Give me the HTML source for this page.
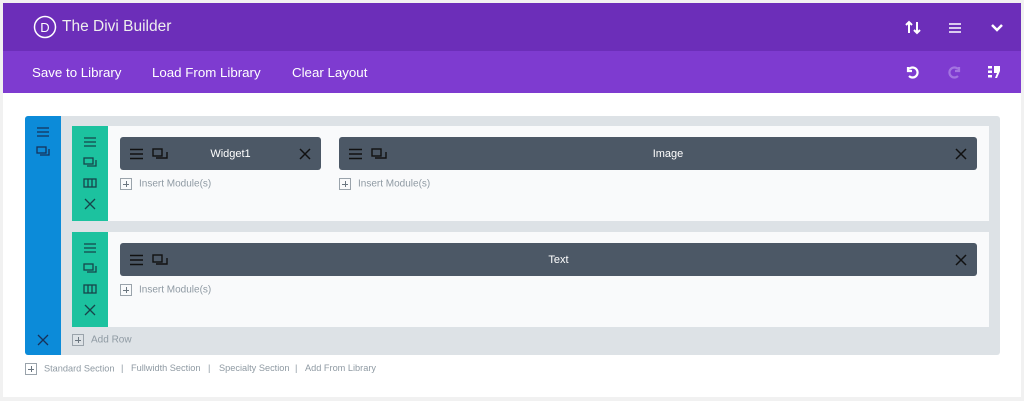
<!DOCTYPE html><html><head><style>
body{margin:0;width:1024px;height:401px;background:#f1f1f1;font-family:"Liberation Sans",sans-serif;position:relative;overflow:hidden}
.a{position:absolute}
.w{left:3px;top:3px;width:1018px;height:394px;background:#fff}
.hd{left:3px;top:3px;width:1018px;height:48px;background:#6c2eb9;color:#fff}
.tb{left:3px;top:51px;width:1018px;height:42px;background:#7e3bd0;color:#fff;font-size:13.3px}
.sec{left:25px;top:116px;width:975px;height:239px;background:#dde2e6;border-radius:3px}
.bl{left:25px;top:116px;width:36px;height:239px;background:#0c8bd9;border-radius:3px 0 0 3px}
.row{background:#f9fafb;left:72px;width:917px;height:95px}
.gr{left:72px;width:36px;height:95px;background:#1cc29f}
.mod{background:#4c5866;height:33px;border-radius:3px;color:#fff;font-size:11px;line-height:35px;text-align:center}
.ins{font-size:10px;color:#8f9aa3;white-space:nowrap}
.ft{font-size:9.2px}
.pl{display:inline-block;width:10px;height:10px;border:1px solid #9aa3ab;position:relative;vertical-align:middle;margin-right:7px}
.pl:before{content:"";position:absolute;left:2px;top:4.5px;width:6px;height:1px;background:#6b7680}
.pl:after{content:"";position:absolute;left:4.5px;top:2px;width:1px;height:6px;background:#6b7680}
svg{position:absolute}
</style></head><body>
<div class="a w"></div>
<div class="a hd">
<svg style="left:30px;top:12px" width="24" height="24"><circle cx="12" cy="12" r="10.5" fill="none" stroke="#fff" stroke-width="1.5"/><text x="12" y="17" font-size="13" fill="#fff" text-anchor="middle" font-family="Liberation Sans">D</text></svg>
<div class="a" style="left:59px;top:15px;font-size:15.5px;color:#eee">The Divi Builder</div>
<svg style="left:902px;top:16px" width="18" height="16" stroke="#fff" stroke-width="2" fill="none"><path d="M4 14V3M1 6l3-3 3 3M12 3v11M9 11l3 3 3-3"/></svg>
<svg style="left:945px;top:19px" width="14" height="12" stroke="#fff" stroke-width="1.6"><path d="M1 2h12M1 6h12M1 10h12"/></svg>
<svg style="left:987px;top:20px" width="14" height="10" stroke="#fff" stroke-width="2.5" fill="none"><path d="M2 2l5 5 5-5"/></svg>
</div>
<div class="a tb">
<span class="a" style="left:29px;top:14px">Save to Library</span>
<span class="a" style="left:149px;top:14px">Load From Library</span>
<span class="a" style="left:289px;top:14px">Clear Layout</span>
<svg style="left:903px;top:15px" width="14" height="14" stroke="#fff" stroke-width="2.2" fill="none"><path d="M3 3a5 5 0 1 1 0 7M2 1v4h4"/></svg>
<svg style="left:944px;top:15px" width="14" height="14" stroke="#a374e0" stroke-width="2.2" fill="none"><path d="M11 3a5 5 0 1 0 0 7M12 1v4h-4"/></svg>
<svg style="left:985px;top:14px" width="14" height="14" fill="#fff"><rect x="0" y="1" width="4" height="2.5"/><rect x="0" y="5.5" width="4" height="2.5"/><rect x="0" y="10" width="4" height="2.5"/><path d="M6 1h6v5l-3 7h-2l2-5h-3z"/></svg>
</div>
<div class="a sec"></div>
<div class="a bl">
<svg style="left:11px;top:11px" width="14" height="40" stroke="#17325a" stroke-width="1.3" fill="none"><path d="M1 1h12M1 5h12M1 9h12"/><rect x="1" y="20" width="9" height="6"/><path d="M4 28h9v-6"/></svg>
<svg style="left:12px;top:218px" width="12" height="12" stroke="#17325a" stroke-width="1.3"><path d="M1 1l10 10M11 1L1 11"/></svg>
</div>
<div class="a row" style="top:126px"></div><div class="a row" style="top:232px"></div>
<div class="a gr" style="top:126px"><svg style="left:11px;top:11px" width="14" height="76" stroke="#17444a" stroke-width="1.3" fill="none"><path d="M1 1h12M1 5h12M1 9h12"/><rect x="1" y="21" width="9" height="6"/><path d="M4 29h9v-6"/><rect x="1" y="42" width="12" height="8"/><path d="M5 42v8M9 42v8M2 62l10 10M12 62L2 72"/></svg></div>
<div class="a gr" style="top:232px"><svg style="left:11px;top:11px" width="14" height="76" stroke="#17444a" stroke-width="1.3" fill="none"><path d="M1 1h12M1 5h12M1 9h12"/><rect x="1" y="21" width="9" height="6"/><path d="M4 29h9v-6"/><rect x="1" y="42" width="12" height="8"/><path d="M5 42v8M9 42v8M2 62l10 10M12 62L2 72"/></svg></div>
<div class="a mod" style="left:120px;top:137px;width:201px"><span style="position:relative;left:10px">Widget1</span></div>
<div class="a mod" style="left:339px;top:137px;width:638px"><span style="position:relative;left:10px">Image</span></div>
<div class="a mod" style="left:120px;top:243px;width:857px"><span style="position:relative;left:10px">Text</span></div>
<svg class="a" style="left:129px;top:148px" width="40" height="12" stroke="#111" stroke-width="1.4" fill="none"><path d="M1 1.5h13M1 6h13M1 10.5h13"/><rect x="24" y="1" width="9" height="7"/><path d="M27 10h11v-6"/></svg>
<svg class="a" style="left:348px;top:148px" width="40" height="12" stroke="#111" stroke-width="1.4" fill="none"><path d="M1 1.5h13M1 6h13M1 10.5h13"/><rect x="24" y="1" width="9" height="7"/><path d="M27 10h11v-6"/></svg>
<svg class="a" style="left:129px;top:254px" width="40" height="12" stroke="#111" stroke-width="1.4" fill="none"><path d="M1 1.5h13M1 6h13M1 10.5h13"/><rect x="24" y="1" width="9" height="7"/><path d="M27 10h11v-6"/></svg>
<svg class="a" style="left:299px;top:148px" width="12" height="12" stroke="#111" stroke-width="1.5"><path d="M1 1l10 10M11 1L1 11"/></svg>
<svg class="a" style="left:955px;top:148px" width="12" height="12" stroke="#111" stroke-width="1.5"><path d="M1 1l10 10M11 1L1 11"/></svg>
<svg class="a" style="left:955px;top:254px" width="12" height="12" stroke="#111" stroke-width="1.5"><path d="M1 1l10 10M11 1L1 11"/></svg>
<div class="a ins" style="left:120px;top:178px"><span class="pl"></span>Insert Module(s)</div>
<div class="a ins" style="left:339px;top:178px"><span class="pl"></span>Insert Module(s)</div>
<div class="a ins" style="left:120px;top:284px"><span class="pl"></span>Insert Module(s)</div>
<div class="a ins" style="left:72px;top:334px"><span class="pl"></span>Add Row</div>
<div class="a ins ft" style="left:25px;top:363px"><span class="pl"></span>Standard Section</div>
<div class="a ins ft" style="left:121px;top:363px">|</div>
<div class="a ins ft" style="left:131px;top:363px">Fullwidth Section</div>
<div class="a ins ft" style="left:208px;top:363px">|</div>
<div class="a ins ft" style="left:219px;top:363px">Specialty Section</div>
<div class="a ins ft" style="left:295px;top:363px">|</div>
<div class="a ins ft" style="left:305px;top:363px">Add From Library</div>
</body></html>
